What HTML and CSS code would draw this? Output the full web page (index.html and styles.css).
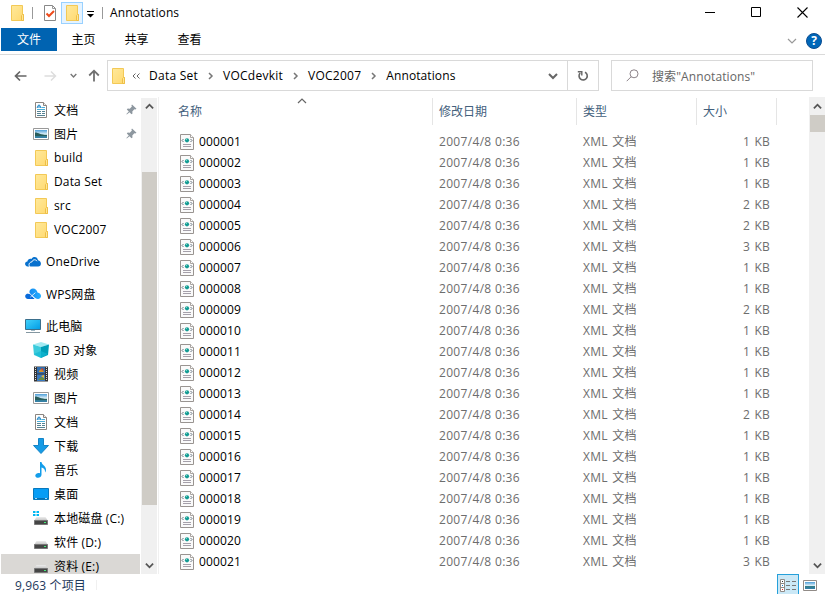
FILE: index.html
```
<!DOCTYPE html>
<html lang="zh-CN">
<head>
    <meta charset="UTF-8">
    <title>Annotations</title>
    <link rel="stylesheet" href="styles.css">
</head>
<body>
    <svg class="sprite" width="0" height="0">
        <defs>
            <linearGradient id="gFolder" x1="0" y1="0" x2="1" y2="1"><stop offset="0" stop-color="#ffe99b"/><stop offset="1" stop-color="#ffd970"/></linearGradient>
            <linearGradient id="gScreen" x1="0" y1="0" x2="1" y2="1"><stop offset="0" stop-color="#43d2fb"/><stop offset="1" stop-color="#009be5"/></linearGradient>
            <linearGradient id="gPhoto" x1="0" y1="0" x2="0" y2="1"><stop offset="0" stop-color="#4c9ed8"/><stop offset=".55" stop-color="#e8f5fa"/><stop offset=".6" stop-color="#337e86"/><stop offset="1" stop-color="#3680ac"/></linearGradient>
            <linearGradient id="gDisk" x1="0" y1="0" x2="0" y2="1"><stop offset="0" stop-color="#ededed"/><stop offset="1" stop-color="#bdbdbd"/></linearGradient>
            <linearGradient id="gWps" x1="0" y1="0" x2="1" y2="0"><stop offset="0" stop-color="#158cf0"/><stop offset="1" stop-color="#24adff"/></linearGradient>
        </defs>
        <symbol id="folder" viewBox="0 0 16 16">
            <path d="M2.5.5h11v9h1v6h-12z" fill="url(#gFolder)" stroke="#f3c956"/>
            <path d="M12.5 15V10.5l1-1h1v6h-2z" fill="#ffe695" stroke="#eebf47"/>
        </symbol>
        <symbol id="doc" viewBox="0 0 16 16">
            <path d="M2.5.5h8l3 3v12h-11z" fill="#fff" stroke="#8b8580"/>
            <path d="M10.5.5v3h3" fill="#eee" stroke="#8b8580"/>
            <path d="M4 6l1.5-3h1L8 6M4.6 5h3" fill="none" stroke="#1683c7"/>
            <path d="M8.5 5.5H12M4 7.5h8" stroke="#4bafd9"/>
            <path d="M4 9.5h4M9 9.5h3M4 11.5h4M9 11.5h3M4 13.5h8" stroke="#548293"/>
        </symbol>
        <symbol id="picture" viewBox="0 0 16 16">
            <path d="M.5 2.5h15v11H.5z" fill="#fff" stroke="#999"/>
            <path d="M2 4h12v8H2z" fill="url(#gPhoto)"/>
            <path d="M2 6.5c4 0 5 2.5 12 2.5v1H2z" fill="#285d5c"/>
        </symbol>
        <symbol id="onedrive" viewBox="0 0 16 16">
            <path d="M2.7 12.5C-.8 12-.7 8 2.4 7.6 2.7 4.8 5.3 4.2 6.5 5 8.2 1.7 12.7 2.7 13 6.3c3.8.5 4 6.2.1 6.2z" fill="#0871ce"/>
            <path d="M5 13c-2-2-.7-5 1.8-5C8 4.8 11.2 5.5 12 7.2" fill="none" stroke="#fff"/>
        </symbol>
        <symbol id="wps" viewBox="0 0 16 16">
            <path d="M5.2 8.5C3.2 5 5.3 2.5 8 2.5c2.5 0 4 1.8 4.5 4 4.7.7 4.5 6.3.5 6.5-3.2 0-4.5-3.5-7.8-4.5z" fill="url(#gWps)"/>
            <path d="M3 13c-3.8-.5-3.8-5.3.3-5.5C6 7.3 7 10.5 10 13z" fill="#086adb"/>
            <path d="M2.8 7.3c3.5-.3 4 3.5 7.7 5.7M5.4 11l5-4.3" fill="none" stroke="#fff" stroke-width=".8"/>
        </symbol>
        <symbol id="pc" viewBox="0 0 16 16">
            <path d="M.5 1.5h15v10H.5z" fill="url(#gScreen)" stroke="#3b6f8c"/>
            <path d="M6 12h4v1H6z" fill="#a2b9c6"/>
            <path d="M1 14.5h14" stroke="#8497a1"/>
        </symbol>
        <symbol id="cube" viewBox="0 0 16 16">
            <path d="M0 2.5L8 0l8 2.5L8 5z" fill="#a3eaf2"/>
            <path d="M0 2.5L8 5v11l-7-3z" fill="#3bcbdc"/>
            <path d="M8 5l8-2.5L15 13l-7 3z" fill="#009eb7"/>
            <path d="M1 12l7-3 7 3-7 4z" fill="#13b8d3" opacity=".7"/>
        </symbol>
        <symbol id="video" viewBox="0 0 16 16">
            <path d="M1 .5h14v15H1z" fill="#353535"/>
            <path d="M4 1h8v6.5H4z" fill="#306daf"/><path d="M4 8.5h8V15H4z" fill="#3a79c1"/>
            <path d="M6 5l2-2 2 1 1 2H6z" fill="#d69229"/><path d="M8 2l3 1-2 2z" fill="#c94631"/>
            <path d="M5 14l3-3 3 1 1 2z" fill="#688f42"/><path d="M8 10l3-1v3z" fill="#edbd35"/>
            <path d="M2.5 1v14M13.5 1v14" stroke="#ddd" stroke-dasharray="1 1"/>
        </symbol>
        <symbol id="download" viewBox="0 0 16 16">
            <path d="M5.5.5h5v7h5L8 15.5.5 7.5h5z" fill="#169be5" stroke="#1484c7"/>
        </symbol>
        <symbol id="music" viewBox="0 0 16 16">
            <path d="M7 0h1.5c.3 3 4.5 3.7 4.5 7.5 0 1.5-.5 2.5-1 3 .3-3-1-4.4-3.5-5v7.2c0 4-6.5 3.8-6.2.8.2-2 2.5-3 4.7-2.3z" fill="#139dea"/>
        </symbol>
        <symbol id="desktop" viewBox="0 0 16 16">
            <path d="M.5 2.5h15v11H.5z" fill="#079df5" stroke="#0778bd"/>
            <path d="M1 12.5h14" stroke="#0671b2"/><path d="M2 12.5h2M12 12.5h2" stroke="#a9dbf5"/>
        </symbol>
        <symbol id="disk" viewBox="0 0 16 16">
            <path d="M3.5 7h9L15 11H1z" fill="url(#gDisk)"/>
            <path d="M1.5 10.5h13v4h-13z" fill="#454545" stroke="#777"/>
            <path d="M11 12.5h2" stroke="#42ed77"/>
        </symbol>
        <symbol id="sysdisk" viewBox="0 0 16 16">
            <use href="#disk"/>
            <path d="M0 1h2.5v2H0zM3.5 1H6v2H3.5zM0 4h2.5v2H0zM3.5 4H6v2H3.5z" fill="#00b7f1"/>
        </symbol>
        <symbol id="xml" viewBox="0 0 16 16">
            <path d="M1.5.5h10l3 3v12h-13z" fill="#fafafa" stroke="#999491"/>
            <path d="M11.5.5v3h3" fill="#fff" stroke="#aaa5a1"/>
            <path d="M4.5 5L3 6.5 4.5 8M11.5 5L13 6.5 11.5 8" fill="none" stroke="#65727e"/>
            <circle cx="8" cy="6.3" r="2.1" fill="#149b94"/><path d="M7 5h1v1H7z" fill="#77dec4"/>
            <path d="M4 10.5h8M4 12.5h8" stroke="#a5a0aa"/>
        </symbol>
        <symbol id="pin" viewBox="0 0 11 11">
            <path d="M6 .5l4.5 4.2-1.2.8-1-.2-2 2.1.2 2-1 .9-2-2L.8 10.5l-.4-.4L2.8 7.5.8 5.5l.9-1 2.1.2L5.9 2.6l-.5-1.2z" fill="#8d979f"/>
        </symbol>
        <symbol id="chevron" viewBox="0 0 10 10"><path d="M1 3l4 4 4-4" fill="none" stroke="currentColor" stroke-width="2"/></symbol>
        <symbol id="thinchevron" viewBox="0 0 10 10"><path d="M1 3l4 4 4-4" fill="none" stroke="currentColor" stroke-width="1.2"/></symbol>
        <symbol id="sep" viewBox="0 0 6 8"><path d="M1 1l3 3-3 3" fill="none" stroke="#777" stroke-width="1.5"/></symbol>
    </svg>

    <div class="window">
        <header class="titlebar">
            <svg class="icon title-folder"><use href="#folder"/></svg>
            <span class="divider"></span>
            <svg class="check" viewBox="0 0 12 16"><path d="M.5.5h8l3 3v12H.5z" fill="#fff" stroke="#888"/><path d="M8.5.5v3h3" fill="none" stroke="#999"/><path d="M2.5 8.5l2.5 2.5 5-5" fill="none" stroke="#ee4b1c" stroke-width="2"/></svg>
            <span class="quick"><svg class="icon"><use href="#folder"/></svg></span>
            <svg class="more" viewBox="0 0 7 7"><path d="M0 .5h7" stroke="#000"/><path d="M0 3h7L3.5 6.5z"/></svg>
            <span class="divider"></span>
            <span class="title">Annotations</span>
            <div class="controls">
                <svg viewBox="0 0 11 11"><path d="M0 5.5h10" stroke="#000"/></svg>
                <svg viewBox="0 0 11 11"><path d="M.5.5h9v9h-9z" fill="none" stroke="#000"/></svg>
                <svg viewBox="0 0 11 11"><path d="M.5.5l10 10M10.5.5l-10 10" stroke="#000" stroke-width="1.1"/></svg>
            </div>
        </header>

        <nav class="ribbon">
            <span class="tab active">文件</span>
            <span class="tab">主页</span>
            <span class="tab">共享</span>
            <span class="tab">查看</span>
            <svg class="expand"><use href="#thinchevron"/></svg>
            <svg class="help" viewBox="0 0 16 16"><circle cx="8" cy="8" r="7.5" fill="#0067b8" stroke="#0b4d91"/><text x="8" y="12.3" text-anchor="middle">?</text></svg>
        </nav>

        <div class="navbar">
            <div class="nav-buttons">
                <svg class="arrow" viewBox="0 0 13 12"><path d="M12.5 6H1.5M6 1.5L1.5 6 6 10.5" fill="none" stroke="#666" stroke-width="1.7"/></svg>
                <svg class="arrow" viewBox="0 0 13 12"><path d="M.5 6h11M7 1.5L11.5 6 7 10.5" fill="none" stroke="#ddd" stroke-width="1.5"/></svg>
                <svg class="recent"><use href="#chevron"/></svg>
                <svg class="up" viewBox="0 0 12 13"><path d="M6 12.5V2M1.2 6.5L6 1.7l4.8 4.8" fill="none" stroke="#707070" stroke-width="1.8"/></svg>
            </div>
            <div class="address">
                <svg class="icon"><use href="#folder"/></svg>
                <svg class="back" viewBox="0 0 8 6"><path d="M3.5.5L1 3l2.5 2.5M7.5.5L5 3l2.5 2.5" fill="none" stroke="#666"/></svg>
                <span>Data Set</span><svg class="sep"><use href="#sep"/></svg>
                <span>VOCdevkit</span><svg class="sep"><use href="#sep"/></svg>
                <span>VOC2007</span><svg class="sep"><use href="#sep"/></svg>
                <span class="current">Annotations</span>
                <svg class="drop"><use href="#chevron"/></svg>
                <div class="refresh"><svg viewBox="0 0 12 12"><path d="M8 2.2A4.1 4.1 0 1 1 3.2 3" fill="none" stroke="#666" stroke-width="1.6"/><path d="M.8 1.7h4v3.8" fill="none" stroke="#666" stroke-width="1.4"/></svg></div>
            </div>
            <div class="search">
                <svg viewBox="0 0 13 13"><circle cx="8" cy="4.8" r="4" fill="none" stroke="#8c8389"/><path d="M5.2 7.7L.7 12.2" stroke="#8c8389"/></svg>
                <span>搜索"Annotations"</span>
            </div>
        </div>

        <main class="content">
            <aside class="sidebar">
                <div class="tree">
                    <div class="item"><svg class="icon"><use href="#doc"/></svg>文档<svg class="pin"><use href="#pin"/></svg></div>
                    <div class="item"><svg class="icon"><use href="#picture"/></svg>图片<svg class="pin"><use href="#pin"/></svg></div>
                    <div class="item"><svg class="icon"><use href="#folder"/></svg>build</div>
                    <div class="item"><svg class="icon"><use href="#folder"/></svg>Data Set</div>
                    <div class="item"><svg class="icon"><use href="#folder"/></svg>src</div>
                    <div class="item"><svg class="icon"><use href="#folder"/></svg>VOC2007</div>
                    <div class="item root"><svg class="icon"><use href="#onedrive"/></svg>OneDrive</div>
                    <div class="item root"><svg class="icon"><use href="#wps"/></svg>WPS网盘</div>
                    <div class="item root"><svg class="icon"><use href="#pc"/></svg>此电脑</div>
                    <div class="item"><svg class="icon"><use href="#cube"/></svg>3D 对象</div>
                    <div class="item"><svg class="icon"><use href="#video"/></svg>视频</div>
                    <div class="item"><svg class="icon"><use href="#picture"/></svg>图片</div>
                    <div class="item"><svg class="icon"><use href="#doc"/></svg>文档</div>
                    <div class="item"><svg class="icon"><use href="#download"/></svg>下载</div>
                    <div class="item"><svg class="icon"><use href="#music"/></svg>音乐</div>
                    <div class="item"><svg class="icon"><use href="#desktop"/></svg>桌面</div>
                    <div class="item"><svg class="icon"><use href="#sysdisk"/></svg>本地磁盘 (C:)</div>
                    <div class="item"><svg class="icon"><use href="#disk"/></svg>软件 (D:)</div>
                    <div class="item selected"><svg class="icon"><use href="#disk"/></svg>资料 (E:)</div>
                </div>
                <div class="scrollbar">
                    <svg class="scroll-up"><use href="#chevron"/></svg>
                    <div class="thumb"></div>
                    <svg class="scroll-down"><use href="#chevron"/></svg>
                </div>
            </aside>
            <section class="files">
                <div class="head">
                    <span>名称<svg class="sort"><use href="#thinchevron"/></svg></span>
                    <span>修改日期</span>
                    <span>类型</span>
                    <span>大小</span>
                </div>
                <div id="rows"></div>
            </section>
            <div class="scrollbar list-scroll">
                <svg class="scroll-up"><use href="#chevron"/></svg>
                <div class="thumb"></div>
                <svg class="scroll-down"><use href="#chevron"/></svg>
            </div>
        </main>

        <footer class="status">
            <span class="count">9,963 个项目</span>
            <span class="view on"><svg viewBox="0 0 16 13"><path d="M.5.5h4v12h-4zM.5 4.5h4M.5 8.5h4" fill="#fff" stroke="#918b87"/><path d="M2 2.5h1" stroke="#333"/><path d="M2 6.5h1" stroke="#167ad1"/><path d="M2 10.5h1" stroke="#e22"/><path d="M6 2.5h4M12 2.5h4M6 6.5h4M12 6.5h4M6 10.5h4M12 10.5h4" stroke="#777"/></svg></span>
            <span class="view"><svg viewBox="0 0 14 11"><path d="M.5.5h13v10H.5z" fill="#fff" stroke="#918b87"/><path d="M2 2h10v7H2z" fill="url(#gPhoto)"/></svg></span>
        </footer>
    </div>

    <script>
        // 文件大小 (KB)
        const sizes = [1, 1, 1, 2, 2, 3, 1, 1, 2, 1, 1, 1, 1, 2, 1, 1, 1, 1, 1, 1, 3];
        const rows = document.getElementById('rows');

        sizes.forEach((size, i) => {
            const row = document.createElement('div');
            row.className = 'row';
            row.innerHTML = `
                <span class="name"><svg class="icon"><use href="#xml"/></svg>${String(i + 1).padStart(6, '0')}</span>
                <span class="date">2007/4/8 0:36</span>
                <span class="type">XML 文档</span>
                <span class="size">${size} KB</span>`;
            rows.appendChild(row);
        });
    </script>
</body>
</html>
```

FILE: styles.css
```
* {
    box-sizing: border-box;
}
body {
    margin: 0;
    font-family: "Open Sans", "Noto Sans CJK SC", sans-serif;
    font-size: 12px;
    color: #000;
    background: #fff;
    overflow: hidden;
}
svg {
    display: block;
    flex-shrink: 0;
}
.sprite {
    position: absolute;
}
.icon {
    width: 16px;
    height: 16px;
}
.window {
    display: flex;
    flex-direction: column;
    width: 825px;
    height: 594px;
}
.titlebar {
    display: flex;
    align-items: center;
    height: 28px;
    padding: 0 17px 3px 9px;
}
.divider {
    width: 1px;
    height: 12px;
    background: #999;
}
.title-folder {
    margin-right: 7px;
}
.check {
    width: 12px;
    height: 16px;
    margin: 0 5px 0 11px;
}
.quick {
    display: flex;
    align-items: center;
    justify-content: center;
    width: 22px;
    height: 22px;
    background: #e5f3ff;
    border: 1px solid #99d1ff;
}
.more {
    width: 7px;
    height: 7px;
    margin: 3px 8px 0 4px;
}
.title {
    margin-left: 7px;
    letter-spacing: 0.1px;
}
.controls {
    display: flex;
    gap: 35px;
    margin-left: auto;
}
.controls svg {
    width: 11px;
    height: 11px;
}
.ribbon {
    display: flex;
    align-items: center;
    height: 27px;
    padding: 0 3px 3px 1px;
    border-bottom: 1px solid #dadada;
}
.tab {
    width: 53px;
    padding-top: 1px;
    line-height: 22px;
    text-align: center;
}
.tab.active {
    width: 56px;
    background: #0063b1;
    color: #fff;
}
.expand {
    width: 10px;
    height: 10px;
    margin-top: 2px;
    margin-left: auto;
    margin-right: 9px;
    color: #999;
}
.help {
    width: 16px;
    height: 16px;
    margin-top: 2px;
}
.help text {
    font-size: 12px;
    font-weight: bold;
    fill: #fff;
}
.navbar {
    display: flex;
    height: 42px;
    padding: 5px 12px 6px 14px;
}
.nav-buttons {
    display: flex;
    align-items: center;
    width: 93px;
}
.arrow {
    width: 13px;
    height: 12px;
    margin-right: 17px;
}
.recent {
    width: 7px;
    height: 7px;
    margin-left: -4px;
    margin-right: 11px;
    color: #777;
}
.up {
    width: 12px;
    height: 13px;
}
.address {
    display: flex;
    align-items: center;
    width: 492px;
    border: 1px solid #d9d9d9;
    letter-spacing: 0.25px;
}
.address .icon {
    margin-left: 2px;
}
.address span {
    padding-bottom: 1px;
}
.address .current {
    letter-spacing: 0.1px;
}
.back {
    width: 8px;
    height: 6px;
    margin: 0 9px 0 6px;
}
.sep {
    width: 6px;
    height: 8px;
    margin: 0 9px 0 10px;
}
.drop {
    width: 10px;
    height: 10px;
    margin-left: auto;
    margin-right: 9px;
    color: #666;
}
.refresh {
    display: flex;
    align-items: center;
    justify-content: center;
    width: 31px;
    height: 29px;
    border-left: 1px solid #d9d9d9;
}
.refresh svg {
    width: 12px;
    height: 12px;
}
.search {
    display: flex;
    align-items: center;
    width: 202px;
    margin-left: 12px;
    padding-left: 14px;
    border: 1px solid #d9d9d9;
    color: #666;
    letter-spacing: 0.1px;
}
.search svg {
    width: 13px;
    height: 13px;
    margin-right: 13px;
}
.content {
    display: flex;
    height: 477px;
}
.sidebar {
    display: flex;
    width: 159px;
    padding-top: 1px;
    border-right: 1px solid #f0f0f0;
}
.tree {
    width: 140px;
    margin-right: 1px;
    overflow: hidden;
}
.item {
    display: flex;
    align-items: center;
    height: 24px;
    padding-left: 33px;
    padding-bottom: 1px;
    white-space: nowrap;
    letter-spacing: 0.15px;
}
.item .icon {
    margin-top: 1px;
    margin-right: 5px;
}
.item.root {
    margin-top: 8px;
    padding-left: 25px;
}
.item.selected {
    margin-left: 1px;
    padding-left: 32px;
    background: #dad8d5;
}
.pin {
    width: 11px;
    height: 11px;
    margin-left: auto;
    margin-right: 3px;
}
.scrollbar {
    display: flex;
    flex-direction: column;
    align-items: center;
    width: 16px;
    background: #f0f0f0;
    color: #555;
}
.scroll-up,
.scroll-down {
    width: 9px;
    height: 9px;
    margin: 4px 0;
}
.scroll-up {
    transform: rotate(180deg);
}
.scroll-down {
    margin-top: auto;
}
.thumb {
    width: 15px;
    height: 333px;
    margin-top: 57px;
    background: #cfccc6;
}
.files {
    width: 650px;
}
.head,
.row {
    display: grid;
    grid-template-columns: 274px 144px 120px 80px;
    align-items: center;
}
.head {
    height: 29px;
    margin-bottom: 5px;
    color: #43607c;
}
.head span {
    display: flex;
    align-items: center;
    height: 27px;
    padding-left: 6px;
    padding-bottom: 1px;
    border-right: 1px solid #e5e5e5;
}
.head span:first-child {
    padding-left: 19px;
}
.sort {
    width: 10px;
    height: 10px;
    margin: 0 0 21px 95px;
    transform: rotate(180deg);
    color: #666;
}
.row {
    height: 21px;
    line-height: 18px;
    color: #6d6d6d;
}
.row span {
    padding-left: 6px;
}
.row .name {
    display: flex;
    align-items: center;
    padding-left: 20px;
    color: #000;
    letter-spacing: 0.14px;
}
.name .icon {
    margin-right: 4px;
}
.row .date {
    letter-spacing: 0.32px;
}
.row .type {
    letter-spacing: 0.3px;
    word-spacing: 1px;
}
.row .size {
    padding-right: 7px;
    text-align: right;
    letter-spacing: 0.2px;
    word-spacing: 1px;
}
.list-scroll {
    padding-top: 1px;
}
.list-scroll .thumb {
    height: 17px;
    margin-top: 0;
}
.status {
    display: flex;
    height: 20px;
    padding: 0 4px 0 15px;
    color: #1e395b;
}
.count {
    width: 82px;
    height: 10px;
    margin-top: 6px;
    line-height: 11px;
    letter-spacing: 0.15px;
    border-right: 1px solid #f0f0f0;
}
.view {
    display: flex;
    align-items: center;
    justify-content: center;
    width: 22px;
    height: 22px;
}
.view svg {
    width: 14px;
    height: 11px;
}
.view.on {
    margin-left: auto;
    background: #cbe8f6;
    border: 1px solid #26a0da;
}
.view.on svg {
    width: 16px;
    height: 13px;
}
```
